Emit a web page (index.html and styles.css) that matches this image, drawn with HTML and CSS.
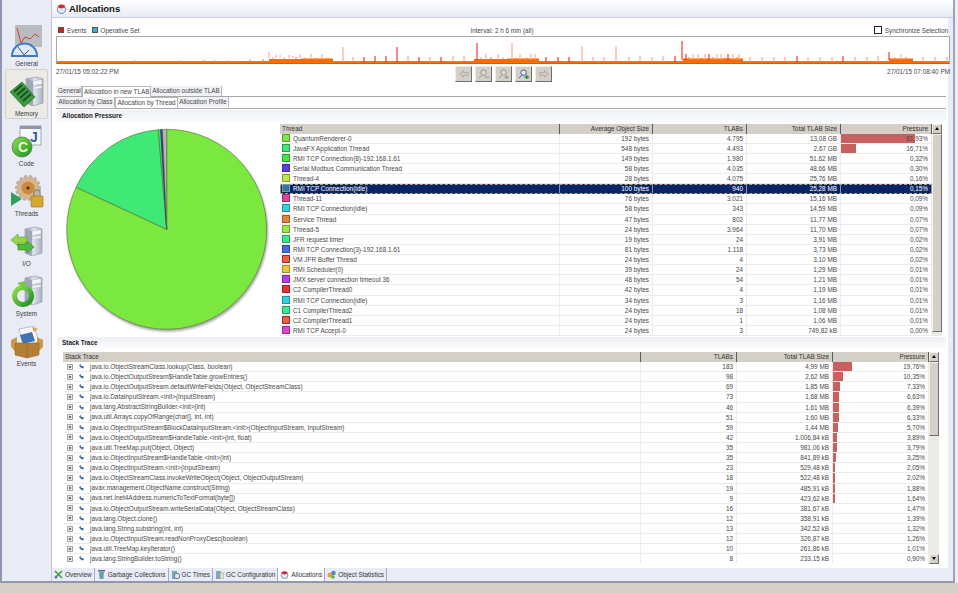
FILE: index.html
```html
<!DOCTYPE html>
<html>
<head>
<title>Allocations</title>
<link rel="stylesheet" href="styles.css">
</head>
<body>
<svg class="defs" width="0" height="0">
<defs>
<linearGradient id="srv" x1="0" x2="1" y1="0" y2="0"><stop offset="0" stop-color="#8d97a8"/><stop offset=".5" stop-color="#dfe3ea"/><stop offset="1" stop-color="#aab2c0"/></linearGradient>
<linearGradient id="grn" x1="0" x2="1" y1="0" y2="1"><stop offset="0" stop-color="#8fe04a"/><stop offset="1" stop-color="#1f8f2a"/></linearGradient>
<symbol id="server" viewBox="0 0 20 30"><path d="M2 3 12 1 19 3V27L9 30 2 27Z" fill="url(#srv)" stroke="#8a93a3" stroke-width=".6"/><path d="M9 5 18 3.500V8L9 9.500ZM9 11 18 9.500V12L9 13.500Z" fill="#f4f5f8" stroke="#aab" stroke-width=".4"/><path d="M2 3 9 5V30L2 27Z" fill="#9ea7b6"/></symbol>
<symbol id="method" viewBox="0 0 6 6"><path d="M0 1.500 2.500 0V2.500H5.500V5H3L1 3Z" fill="#3f6ea8"/></symbol>
<symbol id="plus" viewBox="0 0 7 7"><path d="M.5 .5H6.500V6.500H.5Z" fill="#f4f4f0" stroke="#8e8e88"/><path d="M2 3.500H5M3.500 2V5" stroke="#333" fill="none"/></symbol>
</defs>
</svg>
<div class="window">
<div class="sidebar">
<div class="nav-item">
<svg class="nav-icon" viewBox="0 0 34 34"><rect x="5" y="0" width="27" height="22" fill="#b9bcc0"/><path d="M7 3 11 18 15 12 20 14 25 9 29 12" fill="none" stroke="#d2402e" stroke-width="1"/><path d="M2 31A12.500 12.500 0 0 1 27 31Z" fill="#dfe8f6" stroke="#3e78c8" stroke-width="2"/><path d="M14 30 8 22M14 30 19 25" stroke="#555" stroke-width="1" fill="none"/></svg>
<span>General</span>
</div>
<div class="nav-item selected">
<svg class="nav-icon" viewBox="0 0 34 34"><use href="#server" x="14" y="1" width="20" height="30"/><path d="M0 17 12 7 25 22 14 32Z" fill="#3c9a40" stroke="#1e6a22" stroke-width=".7"/><path d="M4 17 12 10M7 20 15 13M10 23 18 16M13 26 21 19" stroke="#174f1c" stroke-width="1.800"/></svg>
<span>Memory</span>
</div>
<div class="nav-item">
<svg class="nav-icon" viewBox="0 0 34 34"><rect x="10" y="1" width="21" height="19" fill="#f6f7fa" stroke="#8f96a5" stroke-width=".8"/><rect x="10" y="1" width="21" height="3" fill="#8f96a5"/><text x="20" y="17" class="icon-j">J</text><circle cx="12" cy="22" r="10" fill="url(#grn)" stroke="#176f22" stroke-width=".6"/><text x="8" y="27" class="icon-c">C</text></svg>
<span>Code</span>
</div>
<div class="nav-item">
<svg class="nav-icon" viewBox="0 0 34 34"><circle cx="18" cy="13" r="11.500" fill="#d9b48a" stroke="#b9b2a4" stroke-width="3" stroke-dasharray="3 2"/><circle cx="18" cy="13" r="6.500" fill="#c98a3e"/><circle cx="18" cy="13" r="1.500" fill="#3a2a18"/><path d="M1 17 12 24 1 31Z" fill="#2fa05c"/><rect x="21" y="21" width="12" height="11" rx="1" fill="#d6a92e" stroke="#96741c" stroke-width=".6"/><path d="M24 21V18A3 3 0 0 1 30 18V21" fill="none" stroke="#8c8c80" stroke-width="1.500"/></svg>
<span>Threads</span>
</div>
<div class="nav-item">
<svg class="nav-icon" viewBox="0 0 34 34"><use href="#server" x="13" y="1" width="20" height="30"/><path d="M1 15 8 9V12H17V18H8V21Z" fill="#96d648" stroke="#5b9a24" stroke-width=".6"/><path d="M24 22 17 16V19H8V25H17V28Z" fill="#4fbb3a" stroke="#2a8420" stroke-width=".6"/></svg>
<span>I/O</span>
</div>
<div class="nav-item">
<svg class="nav-icon" viewBox="0 0 34 34"><use href="#server" x="13" y="0" width="20" height="30"/><circle cx="13" cy="21" r="8.500" fill="none" stroke="url(#grn)" stroke-width="5"/><path d="M7 8 15 6V14Z" fill="#76c83c"/></svg>
<span>System</span>
</div>
<div class="nav-item">
<svg class="nav-icon" viewBox="0 0 34 34"><path d="M9 4 24 1 29 17 13 20Z" fill="#f3f5fa" stroke="#97a0b4" stroke-width=".6"/><path d="M10 10 22 7 25 16 13 19Z" fill="#3f73b4"/><path d="M22 2 28 4 24 7Z" fill="#e6a24a"/><path d="M1 15 7 12V28L1 22ZM33 15 27 12V28L33 22Z" fill="#c99a4c"/><path d="M5 18H29V30L17 33 5 30Z" fill="#b27f34" stroke="#8c6124" stroke-width=".5"/><path d="M17 18V33" stroke="#8c6124" stroke-width=".6"/></svg>
<span>Events</span>
</div>
</div>

<div class="main">
<div class="title">
<svg class="title-icon" viewBox="0 0 12 12"><circle cx="6" cy="7" r="4.500" fill="#dfe9f5" stroke="#5d83b3"/><path d="M2 4.500A4 3 0 0 1 10 4.500L6 6Z" fill="#d4272b"/></svg>
<h1>Allocations</h1>
</div>

<div class="panel">
<div class="legend-row">
<div class="legend"><i class="dot dot-red"></i>Events <i class="dot dot-blue"></i>Operative Set</div>
<div class="interval">Interval: 2 h 6 min (all)</div>
<div class="sync"><i class="check"></i>Synchronize Selection</div>
</div>

<div class="chart">
<svg viewBox="56 37 892 26" width="892" height="26" preserveAspectRatio="none">
<rect x="56" y="61" width="892" height="2" fill="#ff7000"/>
<path d="M268 59 H300V58.500H332V62H268ZM473 59H506V58.500H538V62H473ZM682 58.500H742V62H682ZM888 58.500H912V62H888Z" fill="#ff6a00"/>
<path d="M64 63V61M76 63V61M87 63V61M99 63V61M111 63V61M122 63V61M134 63V60.500M145 63V61M157 63V61M168 63V61M180 63V60.500M191 63V61M203 63V60M214 63V60.500M226 63V60.500M238 63V61M249 63V59.500M262 63V59M272 60V57.500M283 60V57.500M295 60V57M304 60V57.500M315 60V57.500M327 60V57.500M480 60V57.500M490 60V57M502 60V57.500M515 60V57.500M526 60V57.500M688 60V57M700 60V57.500M712 60V57M724 60V57.500M736 60V57M894 60V57.500M905 60V57" stroke="#ff7a1a"/>
<path d="M268 58V52M275 58V55M279 58V55M288 58V55M292 58V56M299 58V54M310 58V54M321 58V54M342 62V47M352 62V57M407 62V56M429 62V57M452 62V56M463 62V56M497 60V54M485 60V53.500M519 60V54M530 60V54M534 60V54M581 62V46M592 62V57M603 62V57M615 62V46M628 62V57M639 62V56M651 62V57M662 62V56M692 60V54M697 60V54M704 60V54M716 60V54M720 60V54M732 60V54M738 60V54M749 62V57M761 62V57M773 62V57M784 62V57M807 62V57M819 62V57M831 62V57M854 62V57M866 62V57M877 62V56M900 60V54M922 62V57M934 62V57M946 62V57M511 60V43" stroke="#ff9a84"/>
<path d="M363 62V57M374 62V56M385 62V56M396 62V47M418 62V57M440 62V57M476 60V43M545 62V57M557 62V57M568 62V57M674 62V56M681 60V41M685 60V54M708 60V54M727 60V54M842 62V56M796 62V56M888 60V52" stroke="#f4100a"/>
</svg>
</div>

<div class="control-row">
<div class="date">27/01/15 05:02:22 PM</div>
<div class="buttons">
<button class="tool"><svg viewBox="0 0 11 11"><path d="M1 5.500 5 2V4H10V7H5V9Z" fill="none" stroke="#aaa59a"/></svg></button>
<button class="tool"><svg viewBox="0 0 11 11"><circle cx="5" cy="4" r="3" fill="#dcdad4" stroke="#8f8c84"/><path d="M3 7 0 10M6 9H11" stroke="#8f8c84"/></svg></button>
<button class="tool"><svg viewBox="0 0 11 11"><circle cx="5" cy="4" r="3" fill="#dcdad4" stroke="#8f8c84"/><path d="M3 7 0 10M6 9H11M8.500 7V11" stroke="#8f8c84"/></svg></button>
<button class="tool"><svg viewBox="0 0 11 11"><circle cx="5" cy="4" r="3" fill="#e8eefa" stroke="#2e4e8e"/><path d="M3 7 0 10" stroke="#2e4e8e"/><path d="M6 9H11M8.500 6.500V11" stroke="#1b8a2e" stroke-width="1.500"/></svg></button>
<button class="tool"><svg viewBox="0 0 11 11"><path d="M10 5.500 6 2V4H1V7H6V9Z" fill="none" stroke="#aaa59a"/></svg></button>
</div>
<div class="date date-end">27/01/15 07:08:40 PM</div>
</div>

<div class="tabs">
<span class="tab tab-a">General</span><span class="tab tab-b active">Allocation in new TLAB</span><span class="tab tab-c">Allocation outside TLAB</span>
</div>
<div class="tabs tabs-sub">
<span class="tab tab-d">Allocation by Class</span><span class="tab tab-e active">Allocation by Thread</span><span class="tab tab-f">Allocation Profile</span>
</div>

<div class="section-head">Allocation Pressure</div>
<div class="pressure">
<svg class="pie" viewBox="0 0 224 214" width="224" height="214">
<g stroke="#5a6a40" stroke-width=".6">
<path d="M110.700 107.300V7.300A100 100 0 1 1 20 65.200Z" fill="#7ae83e"/>
<path d="M110.700 107.300 20 65.200A100 100 0 0 1 102.200 7.700Z" fill="#40e875"/>
<path d="M110.700 107.300 102.200 7.700A100 100 0 0 1 104.700 7.500Z" fill="#40e840"/>
<path d="M110.700 107.300 104.700 7.500A100 100 0 0 1 106.500 7.400Z" fill="#3a2ce0" stroke="#2a2090"/>
<path d="M110.700 107.300 106.500 7.400A100 100 0 0 1 110.700 7.300Z" fill="#b8b6b0"/>
</g>
</svg>
<div class="grid thread-grid">
<div class="rows">
<div class="row head"><div>Thread</div><div class="num">Average Object Size</div><div class="num">TLABs</div><div class="num">Total TLAB Size</div><div class="num">Pressure</div></div>
<div class="row"><div><i class="swatch s1"></i>QuantumRenderer-0</div><div class="num">192 bytes</div><div class="num">4.795</div><div class="num">13,08 GB</div><div class="num bar"><i style="width:81.93%"></i>81,93%</div></div>
<div class="row"><div><i class="swatch s2"></i>JavaFX Application Thread</div><div class="num">548 bytes</div><div class="num">4.493</div><div class="num">2,67 GB</div><div class="num bar"><i style="width:16.71%"></i>16,71%</div></div>
<div class="row"><div><i class="swatch s3"></i>RMI TCP Connection(8)-192.168.1.61</div><div class="num">149 bytes</div><div class="num">1.980</div><div class="num">51,62 MB</div><div class="num">0,32%</div></div>
<div class="row"><div><i class="swatch s4"></i>Serial Modbus Communication Thread</div><div class="num">58 bytes</div><div class="num">4.035</div><div class="num">48,66 MB</div><div class="num">0,30%</div></div>
<div class="row"><div><i class="swatch s5"></i>Thread-4</div><div class="num">28 bytes</div><div class="num">4.075</div><div class="num">25,76 MB</div><div class="num">0,16%</div></div>
<div class="row picked"><div><i class="swatch s6"></i>RMI TCP Connection(idle)</div><div class="num">100 bytes</div><div class="num">940</div><div class="num">25,28 MB</div><div class="num">0,15%</div></div>
<div class="row"><div><i class="swatch s7"></i>Thread-11</div><div class="num">76 bytes</div><div class="num">3.021</div><div class="num">15,16 MB</div><div class="num">0,09%</div></div>
<div class="row"><div><i class="swatch s8"></i>RMI TCP Connection(idle)</div><div class="num">58 bytes</div><div class="num">343</div><div class="num">14,59 MB</div><div class="num">0,09%</div></div>
<div class="row"><div><i class="swatch s9"></i>Service Thread</div><div class="num">47 bytes</div><div class="num">802</div><div class="num">11,77 MB</div><div class="num">0,07%</div></div>
<div class="row"><div><i class="swatch s10"></i>Thread-5</div><div class="num">24 bytes</div><div class="num">3.964</div><div class="num">11,70 MB</div><div class="num">0,07%</div></div>
<div class="row"><div><i class="swatch s11"></i>JFR request timer</div><div class="num">19 bytes</div><div class="num">24</div><div class="num">3,91 MB</div><div class="num">0,02%</div></div>
<div class="row"><div><i class="swatch s12"></i>RMI TCP Connection(3)-192.168.1.61</div><div class="num">81 bytes</div><div class="num">1.118</div><div class="num">3,73 MB</div><div class="num">0,02%</div></div>
<div class="row"><div><i class="swatch s13"></i>VM JFR Buffer Thread</div><div class="num">24 bytes</div><div class="num">4</div><div class="num">3,10 MB</div><div class="num">0,02%</div></div>
<div class="row"><div><i class="swatch s14"></i>RMI Scheduler(0)</div><div class="num">39 bytes</div><div class="num">24</div><div class="num">1,29 MB</div><div class="num">0,01%</div></div>
<div class="row"><div><i class="swatch s15"></i>JMX server connection timeout 36</div><div class="num">48 bytes</div><div class="num">54</div><div class="num">1,21 MB</div><div class="num">0,01%</div></div>
<div class="row"><div><i class="swatch s16"></i>C2 CompilerThread0</div><div class="num">42 bytes</div><div class="num">4</div><div class="num">1,19 MB</div><div class="num">0,01%</div></div>
<div class="row"><div><i class="swatch s8"></i>RMI TCP Connection(idle)</div><div class="num">34 bytes</div><div class="num">3</div><div class="num">1,16 MB</div><div class="num">0,01%</div></div>
<div class="row"><div><i class="swatch s11"></i>C1 CompilerThread2</div><div class="num">24 bytes</div><div class="num">18</div><div class="num">1,08 MB</div><div class="num">0,01%</div></div>
<div class="row"><div><i class="swatch s13"></i>C2 CompilerThread1</div><div class="num">24 bytes</div><div class="num">1</div><div class="num">1,06 MB</div><div class="num">0,01%</div></div>
<div class="row"><div><i class="swatch s17"></i>RMI TCP Accept-0</div><div class="num">24 bytes</div><div class="num">3</div><div class="num">749,82 kB</div><div class="num">0,00%</div></div>
</div>
<div class="scroll"><b class="arrow up"></b><b class="thumb thumb-long"></b></div>
</div>
</div>

<div class="section-head second">Stack Trace</div>
<div class="grid stack-grid">
<div class="rows">
<div class="row head"><div>Stack Trace</div><div class="num">TLABs</div><div class="num">Total TLAB Size</div><div class="num">Pressure</div></div>
<div class="row"><div class="frame"><svg class="plus"><use href="#plus"/></svg><svg class="method"><use href="#method"/></svg>java.io.ObjectStreamClass.lookup(Class, boolean)</div><div class="num">183</div><div class="num">4,99 MB</div><div class="num bar"><i style="width:19.76%"></i>19,76%</div></div>
<div class="row"><div class="frame"><svg class="plus"><use href="#plus"/></svg><svg class="method"><use href="#method"/></svg>java.io.ObjectOutputStream$HandleTable.growEntries()</div><div class="num">98</div><div class="num">2,62 MB</div><div class="num bar"><i style="width:10.35%"></i>10,35%</div></div>
<div class="row"><div class="frame"><svg class="plus"><use href="#plus"/></svg><svg class="method"><use href="#method"/></svg>java.io.ObjectOutputStream.defaultWriteFields(Object, ObjectStreamClass)</div><div class="num">69</div><div class="num">1,85 MB</div><div class="num bar"><i style="width:7.33%"></i>7,33%</div></div>
<div class="row"><div class="frame"><svg class="plus"><use href="#plus"/></svg><svg class="method"><use href="#method"/></svg>java.io.DataInputStream.&lt;init&gt;(InputStream)</div><div class="num">73</div><div class="num">1,68 MB</div><div class="num bar"><i style="width:6.63%"></i>6,63%</div></div>
<div class="row"><div class="frame"><svg class="plus"><use href="#plus"/></svg><svg class="method"><use href="#method"/></svg>java.lang.AbstractStringBuilder.&lt;init&gt;(int)</div><div class="num">46</div><div class="num">1,61 MB</div><div class="num bar"><i style="width:6.39%"></i>6,39%</div></div>
<div class="row"><div class="frame"><svg class="plus"><use href="#plus"/></svg><svg class="method"><use href="#method"/></svg>java.util.Arrays.copyOfRange(char[], int, int)</div><div class="num">51</div><div class="num">1,60 MB</div><div class="num bar"><i style="width:6.33%"></i>6,33%</div></div>
<div class="row"><div class="frame"><svg class="plus"><use href="#plus"/></svg><svg class="method"><use href="#method"/></svg>java.io.ObjectInputStream$BlockDataInputStream.&lt;init&gt;(ObjectInputStream, InputStream)</div><div class="num">59</div><div class="num">1,44 MB</div><div class="num bar"><i style="width:5.7%"></i>5,70%</div></div>
<div class="row"><div class="frame"><svg class="plus"><use href="#plus"/></svg><svg class="method"><use href="#method"/></svg>java.io.ObjectOutputStream$HandleTable.&lt;init&gt;(int, float)</div><div class="num">42</div><div class="num">1.006,84 kB</div><div class="num bar"><i style="width:3.89%"></i>3,89%</div></div>
<div class="row"><div class="frame"><svg class="plus"><use href="#plus"/></svg><svg class="method"><use href="#method"/></svg>java.util.TreeMap.put(Object, Object)</div><div class="num">35</div><div class="num">981,06 kB</div><div class="num bar"><i style="width:3.79%"></i>3,79%</div></div>
<div class="row"><div class="frame"><svg class="plus"><use href="#plus"/></svg><svg class="method"><use href="#method"/></svg>java.io.ObjectInputStream$HandleTable.&lt;init&gt;(int)</div><div class="num">35</div><div class="num">841,89 kB</div><div class="num bar"><i style="width:3.25%"></i>3,25%</div></div>
<div class="row"><div class="frame"><svg class="plus"><use href="#plus"/></svg><svg class="method"><use href="#method"/></svg>java.io.ObjectInputStream.&lt;init&gt;(InputStream)</div><div class="num">23</div><div class="num">529,48 kB</div><div class="num bar"><i style="width:2.05%"></i>2,05%</div></div>
<div class="row"><div class="frame"><svg class="plus"><use href="#plus"/></svg><svg class="method"><use href="#method"/></svg>java.io.ObjectStreamClass.invokeWriteObject(Object, ObjectOutputStream)</div><div class="num">18</div><div class="num">522,48 kB</div><div class="num bar"><i style="width:2.02%"></i>2,02%</div></div>
<div class="row"><div class="frame"><svg class="plus"><use href="#plus"/></svg><svg class="method"><use href="#method"/></svg>javax.management.ObjectName.construct(String)</div><div class="num">19</div><div class="num">485,91 kB</div><div class="num bar"><i style="width:1.88%"></i>1,88%</div></div>
<div class="row"><div class="frame"><svg class="plus"><use href="#plus"/></svg><svg class="method"><use href="#method"/></svg>java.net.Inet4Address.numericToTextFormat(byte[])</div><div class="num">9</div><div class="num">423,62 kB</div><div class="num bar"><i style="width:1.64%"></i>1,64%</div></div>
<div class="row"><div class="frame"><svg class="plus"><use href="#plus"/></svg><svg class="method"><use href="#method"/></svg>java.io.ObjectOutputStream.writeSerialData(Object, ObjectStreamClass)</div><div class="num">16</div><div class="num">381,67 kB</div><div class="num">1,47%</div></div>
<div class="row"><div class="frame"><svg class="plus"><use href="#plus"/></svg><svg class="method"><use href="#method"/></svg>java.lang.Object.clone()</div><div class="num">12</div><div class="num">358,91 kB</div><div class="num">1,39%</div></div>
<div class="row"><div class="frame"><svg class="plus"><use href="#plus"/></svg><svg class="method"><use href="#method"/></svg>java.lang.String.substring(int, int)</div><div class="num">13</div><div class="num">342,52 kB</div><div class="num">1,32%</div></div>
<div class="row"><div class="frame"><svg class="plus"><use href="#plus"/></svg><svg class="method"><use href="#method"/></svg>java.io.ObjectInputStream.readNonProxyDesc(boolean)</div><div class="num">12</div><div class="num">326,87 kB</div><div class="num">1,26%</div></div>
<div class="row"><div class="frame"><svg class="plus"><use href="#plus"/></svg><svg class="method"><use href="#method"/></svg>java.util.TreeMap.keyIterator()</div><div class="num">10</div><div class="num">261,86 kB</div><div class="num">1,01%</div></div>
<div class="row"><div class="frame"><svg class="plus"><use href="#plus"/></svg><svg class="method"><use href="#method"/></svg>java.lang.StringBuilder.toString()</div><div class="num">8</div><div class="num">233,15 kB</div><div class="num">0,90%</div></div>
</div>
<div class="scroll"><b class="arrow up"></b><b class="thumb thumb-short"></b><b class="track"></b><b class="arrow down"></b></div>
</div>
</div>

<div class="pages">
<span class="page"><svg viewBox="0 0 9 9"><path d="M1 8 8 1M1 1 8 8" stroke="#3d9a3d" stroke-width="1.500"/><circle cx="2" cy="7" r="1.500" fill="#5a7fb8"/></svg>Overview</span>
<span class="page"><svg viewBox="0 0 9 9"><path d="M2 2H7L6.500 9H2.500Z" fill="#6f9fb0"/><rect x="1" y="0" width="7" height="1.500" fill="#40708a"/></svg>Garbage Collections</span>
<span class="page"><svg viewBox="0 0 9 9"><path d="M1 1H6V9H1Z" fill="#7fa8bb"/><circle cx="6" cy="6" r="2.800" fill="#dfe6ee" stroke="#5a7f99"/></svg>GC Times</span>
<span class="page"><svg viewBox="0 0 9 9"><path d="M1 1H6V9H1Z" fill="#7fa8bb"/><rect x="5" y="3" width="4" height="6" fill="#dbe3d0" stroke="#8a9a80" stroke-width=".5"/></svg>GC Configuration</span>
<span class="page active"><svg viewBox="0 0 12 12"><circle cx="6" cy="7" r="4.500" fill="#dfe9f5" stroke="#5d83b3"/><path d="M2 4.500A4 3 0 0 1 10 4.500L6 6Z" fill="#d4272b"/></svg>Allocations</span>
<span class="page"><svg viewBox="0 0 9 9"><circle cx="3" cy="5" r="2.500" fill="#e8a52c"/><circle cx="6.500" cy="3" r="2.300" fill="#4d8bd0"/><circle cx="6" cy="7" r="1.800" fill="#5db04a"/></svg>Object Statistics</span>
</div>
</div>
</div>
</body>
</html>
```
FILE: styles.css
```css
/* Flight recorder window */

html, body
{ margin: 0;
height: 593px;
overflow: hidden;
background-color: #d4d0c8;
font-family: "Liberation Sans", Arial, sans-serif;
font-size: 6.4px;
color: #484848;
}

.defs
{ display: block;
height: 0;
}

.window
{ display: flex;
height: 581px;
margin-right: 3px;
background-color: #e9ecf6;
border-left: 2px solid #8e98b0;
border-right: 2px solid #9aa4be;
border-bottom: 2px solid #8e98b0;
box-shadow: 3px 0 0 #eceef4;
}

/* Left navigation */

.sidebar
{ width: 50px;
padding-top: 19px;
box-sizing: border-box;
border-right: 1px solid #c3c8d6;
background-color: #e9ecf5;
flex: none;
}

.nav-item
{ height: 50px;
margin: 0 3px 0 3px;
box-sizing: border-box;
display: flex;
flex-direction: column;
align-items: center;
padding-top: 5px;
border: 1px solid transparent;
}

.nav-item span
{ margin-top: 1px;
color: #3c3c3c;
}

.nav-item.selected
{ background-color: #ebeae5;
border-color: #d2d1ca;
border-radius: 2px;
}

.nav-icon
{ width: 34px;
height: 34px;
flex: none;
}

.icon-j
{ font: bold 14px "Liberation Sans", sans-serif;
fill: #2a62b8;
}

.icon-c
{ font: bold 14px "Liberation Sans", sans-serif;
fill: #e8f8d8;
}

/* Main area */

.main
{ flex: 1;
min-width: 0;
display: flex;
flex-direction: column;
}

.title
{ height: 18px;
box-sizing: border-box;
display: flex;
align-items: center;
padding-left: 4px;
gap: 2px;
background: linear-gradient(#ffffff, #e8ebf3);
border-bottom: 1px solid #c8cfe2;
}

.title-icon
{ width: 11px;
height: 11px;
}

.title h1
{ margin: 0;
font-size: 9.5px;
font-weight: bold;
color: #111;
}

.panel
{ height: 550px;
margin-right: 5px;
padding: 6px 0 0 4px;
box-sizing: border-box;
background-color: #fff;
}

.legend-row
{ height: 12px;
display: grid;
grid-template-columns: 1fr auto 1fr;
align-items: center;
}

.legend
{ display: flex;
align-items: center;
gap: 3px;
padding-left: 2px;
}

.dot
{ width: 4px;
height: 4px;
border: 1px solid #555;
}

.dot-red { background-color: #d8200c; }
.dot-blue { background-color: #30b4d8; margin-left: 2px; }

.sync
{ display: flex;
align-items: center;
justify-content: flex-end;
gap: 3px;
}

.check
{ width: 6px;
height: 6px;
border: 1px solid #222;
background-color: #fff;
}

.chart
{ height: 26px;
width: 892px;
border: 1px solid #a8a8a8;
border-bottom-color: #777;
background-color: #fff;
}

.chart svg
{ display: block;
}

.control-row
{ height: 22px;
width: 894px;
padding-top: 2px;
box-sizing: border-box;
display: grid;
grid-template-columns: 1fr auto 1fr;
}

.date
{ padding-top: 2px;
}

.date-end
{ text-align: right;
}

.buttons
{ display: flex;
gap: 3px;
}

.tool
{ width: 17px;
height: 16px;
padding: 2px 3px;
background-color: #d4d0c8;
border: 1px solid;
border-color: #eeece6 #6f6d68 #6f6d68 #eeece6;
}

.tool svg
{ display: block;
width: 10px;
height: 10px;
}

/* Tabs */

.tabs
{ height: 11px;
display: flex;
margin-right: 2px;
padding-left: 1px;
box-sizing: border-box;
border-bottom: 1px solid #a8a8a8;
}

.tabs-sub
{ height: 12px;
}

.tab
{ box-sizing: border-box;
padding: 0 1px;
text-align: center;
white-space: nowrap;
line-height: 10px;
background-color: #f1f2f6;
border: 1px solid #b8b8b8;
border-width: 0 1px 0 0;
height: 10px;
}

.tab.active
{ background-color: #fff;
height: 11px;
border-width: 1px 1px 0 1px;
line-height: 9px;
}

.tab-a { width: 25px; }
.tab-b { width: 69px; }
.tab-c { width: 71px; }
.tab-d { width: 58px; }
.tab-e { width: 63px; }
.tab-f { width: 51px; }

.section-head
{ height: 12px;
margin: 1px 2px 0 1px;
padding-left: 5px;
font-weight: bold;
line-height: 11px;
color: #222;
background: linear-gradient(#eef0f6, #fafbfd);
border-radius: 3px 3px 0 0;
}

.section-head.second
{ height: 11px;
margin-top: 1px;
}

.pressure
{ height: 214px;
display: flex;
}

.pie
{ display: block;
flex: none;
filter: drop-shadow(1px 2px 1px rgba(0, 0, 0, .35));
}

/* Tables */

.grid
{ display: flex;
overflow: hidden;
}

.thread-grid
{ margin-top: 2px;
height: 212px;
}

.stack-grid
{ margin: 4px 0 0 7px;
width: 876px;
height: 212px;
}

.rows
{ flex: 1;
min-width: 0;
}

.row
{ display: grid;
height: 10.13px;
line-height: 9.6px;
box-sizing: border-box;
border-bottom: 1px solid #ececec;
}

.thread-grid .row
{ grid-template-columns: 280px 93px 94px 94px 91px;
}

.stack-grid .row
{ grid-template-columns: 578px 96px 96px 96px;
}

.row > div
{ position: relative;
padding: 0 2px;
white-space: nowrap;
overflow: hidden;
border-right: 1px solid #ececec;
}

.row .num
{ text-align: right;
padding-right: 3px;
}

.row.head
{ height: 9.6px;
background-color: #d4d0c8;
border-bottom: 0;
color: #333;
}

.stack-grid .row.head
{ height: 10px;
}

.row.head > div
{ border-right: 1px solid #5e5c58;
}

.row.picked
{ background-color: #0a246a;
color: #fff;
border-bottom: 1px solid #0a246a;
outline: 1px dashed #b8a878;
outline-offset: -1px;
}

.row.picked > div
{ border-right-color: #8a93b4;
}

.swatch
{ display: inline-block;
width: 6px;
height: 6px;
margin: 0 3px 0 0;
vertical-align: -1px;
border: 1px solid #666;
}

.s1 { background-color: #7ae83e; border-color: #55a02c; }
.s2 { background-color: #40e875; border-color: #2ca050; }
.s3 { background-color: #40e840; border-color: #2ca02c; }
.s4 { background-color: #5a40e8; border-color: #3e2ca0; }
.s5 { background-color: #b8e83e; border-color: #80a02c; }
.s6 { background-color: #2a7aa0; border-color: #8a93b4; }
.s7 { background-color: #e83ea0; border-color: #a02c70; }
.s8 { background-color: #35d0e0; border-color: #2490a0; }
.s9 { background-color: #e8803e; border-color: #a0582c; }
.s10 { background-color: #9ae83e; border-color: #6aa02c; }
.s11 { background-color: #3ee890; border-color: #2ca064; }
.s12 { background-color: #3e6ee8; border-color: #2c4ca0; }
.s13 { background-color: #e8603e; border-color: #a02c2c; }
.s14 { background-color: #e8c83e; border-color: #a08a2c; }
.s15 { background-color: #b83ee8; border-color: #802ca0; }
.s16 { background-color: #e83030; border-color: #a02020; }
.s17 { background-color: #e83ed0; border-color: #a02c90; }

.frame
{ display: flex;
align-items: center;
}

.plus
{ width: 6px;
height: 6px;
margin-left: 2px;
flex: none;
}

.method
{ width: 5px;
height: 5px;
margin: 0 6px 0 6px;
flex: none;
}

.bar
{ isolation: isolate;
}

.bar i
{ position: absolute;
left: 0;
top: 0;
bottom: 0;
z-index: -1;
background-color: #c96060;
}

.scroll
{ width: 10px;
flex: none;
display: flex;
flex-direction: column;
background-color: #eceae6;
}

.scroll b
{ display: block;
box-sizing: border-box;
}

.arrow
{ height: 10px;
background-color: #d4d0c8;
border: 1px solid;
border-color: #f4f2ec #6f6d68 #6f6d68 #f4f2ec;
position: relative;
}

.arrow:after
{ content: "";
position: absolute;
left: 2px;
top: 2px;
border: 2px solid transparent;
}

.arrow.up:after { border-bottom: 3px solid #000; border-top: 0; }
.arrow.down:after { border-top: 3px solid #000; border-bottom: 0; }

.thumb
{ background-color: #d4d0c8;
border: 1px solid;
border-color: #f4f2ec #6f6d68 #6f6d68 #f4f2ec;
}

.thumb-long { height: 198px; }
.thumb-short { height: 74px; }
.track { flex: 1; }

/* Bottom page tabs */

.pages
{ height: 13px;
display: flex;
background-color: #e9ecf6;
}

.page
{ display: flex;
align-items: center;
gap: 2px;
padding: 0 2px;
height: 13px;
box-sizing: border-box;
border-right: 1px solid #a8acb8;
color: #333;
}

.page.active
{ background-color: #fff;
}

.page svg
{ width: 9px;
height: 9px;
flex: none;
}
```
